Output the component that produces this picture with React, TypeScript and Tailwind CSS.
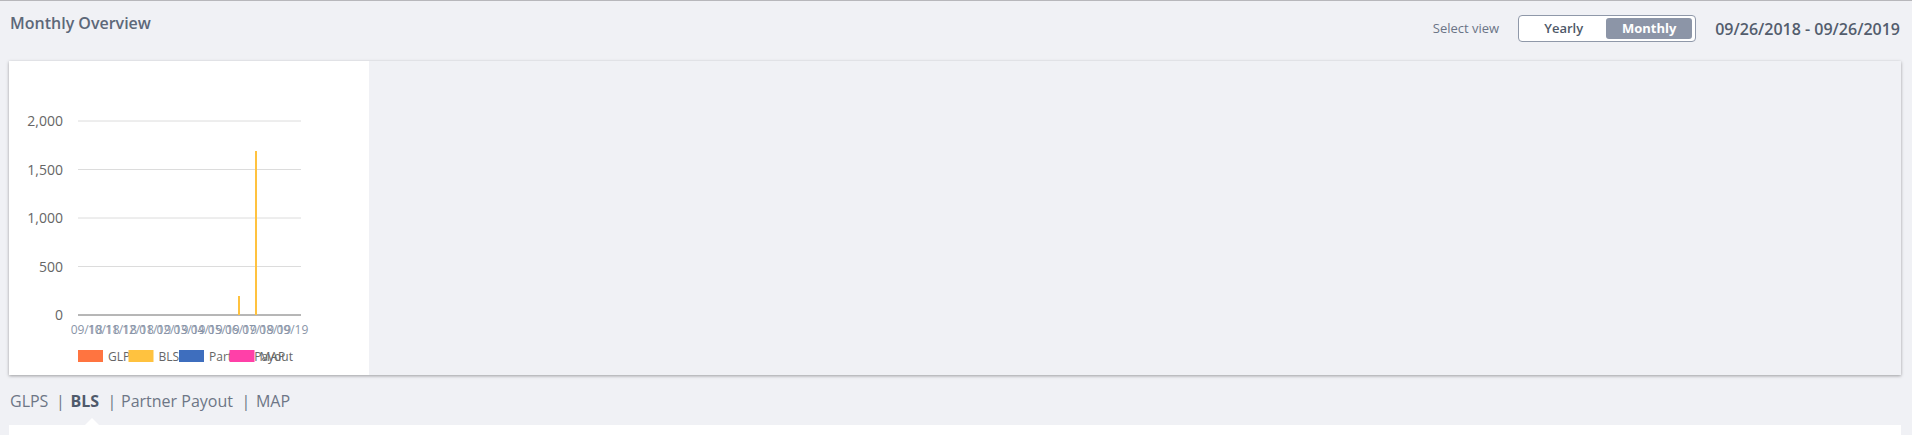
import React from "react";

const months = ["09/18","10/18","11/18","12/18","01/19","02/19","03/19","04/19","05/19","06/19","07/19","08/19","09/19"];
const grid = [
  { v: "2,000", y: 60 },
  { v: "1,500", y: 108.5 },
  { v: "1,000", y: 157 },
  { v: "500", y: 205.5 },
  { v: "0", y: 254 },
];
const legend = [
  { c: "#ff7440", t: "GLPS", x: 69 },
  { c: "#ffc23f", t: "BLS", x: 119.5 },
  { c: "#3e6ebe", t: "Partner Payout", x: 170 },
  { c: "#ff40a8", t: "MAP", x: 220.5 },
];

function Chart() {
  const x0 = 69;
  const bw = 17.15;
  return (
    <svg width="360" height="314" viewBox="0 0 360 314" style={{ fontFamily: "'Open Sans', sans-serif" }}>
      {grid.map((g) => (
        <g key={g.v}>
          <line x1={x0} x2={292} y1={g.y} y2={g.y} stroke={g.v === "0" ? "#6e6e6e" : "#dcdcdc"} strokeWidth={1} />
          <text x={54} y={g.y + 5} textAnchor="end" fontSize={14} fill="#666">{g.v}</text>
        </g>
      ))}
      <rect x={229} y={235} width={2} height={19} fill="#ffc23f" />
      <rect x={246} y={90} width={2} height={164} fill="#ffc23f" />
      {months.map((m, i) => (
        <text key={m} x={x0 + bw * (i + 0.5)} y={273} textAnchor="middle" fontSize={12} fill="#8a95a8">{m}</text>
      ))}
      {legend.map((l) => (
        <g key={l.t}>
          <rect x={l.x} y={289} width={25} height={12} fill={l.c} />
          <text x={l.x + 30} y={299.5} fontSize={12} fill="#666">{l.t}</text>
        </g>
      ))}
    </svg>
  );
}

export default function App() {
  return (
    <div className="w-[1912px] h-[435px] overflow-hidden bg-[#f0f1f5] border-t border-[#b7b7bb] font-['Open_Sans',sans-serif]">
      <div className="h-[60px] flex justify-between items-start pl-[10px] pr-[12px] pt-[12px]">
        <div className="text-[16px] leading-[20px] font-semibold text-[#5d6879]">Monthly Overview</div>
        <div className="flex items-center gap-[19px] mt-[2px]">
          <span className="text-[13px] text-[#6b7486]">Select view</span>
          <div className="w-[178px] h-[27px] border border-[#8f98a9] rounded-[4px] bg-white flex items-center pl-[2px] pr-[3px]">
            <div className="flex-1 text-center text-[13px] font-semibold text-[#4e5868]">Yearly</div>
            <div className="w-[86px] h-[21px] rounded-[3px] bg-[#8c95a7] text-white text-[13px] font-bold flex items-center justify-center">Monthly</div>
          </div>
          <span className="text-[16px] font-semibold text-[#535d6d]">09/26/2018 - 09/26/2019</span>
        </div>
      </div>
      <div className="ml-[9px] w-[1892px] h-[314px] flex shadow-[0_1px_3px_rgba(0,0,0,0.35)]">
        <div className="w-[360px] h-full bg-white">
          <Chart />
        </div>
        <div className="flex-1 bg-[#f0f1f5]" />
      </div>
      <div className="relative h-[50px] pt-[14px] pl-[10px] flex items-start text-[16px] leading-[24px] text-[#6d7686]">
        <span>GLPS</span>
        <span className="w-[10px] text-center ml-[7px] mr-[5px]">|</span>
        <span className="font-bold text-[#4f5a6b]">BLS</span>
        <span className="w-[10px] text-center ml-[8px] mr-[4px]">|</span>
        <span>Partner Payout</span>
        <span className="w-[10px] text-center ml-[8px] mr-[5px]">|</span>
        <span>MAP</span>
        <div className="absolute left-[85px] bottom-0 w-0 h-0 border-l-[7px] border-r-[7px] border-b-[7px] border-l-transparent border-r-transparent border-b-white" />
      </div>
      <div className="ml-[9px] w-[1892px] h-[20px] bg-white" />
    </div>
  );
}
